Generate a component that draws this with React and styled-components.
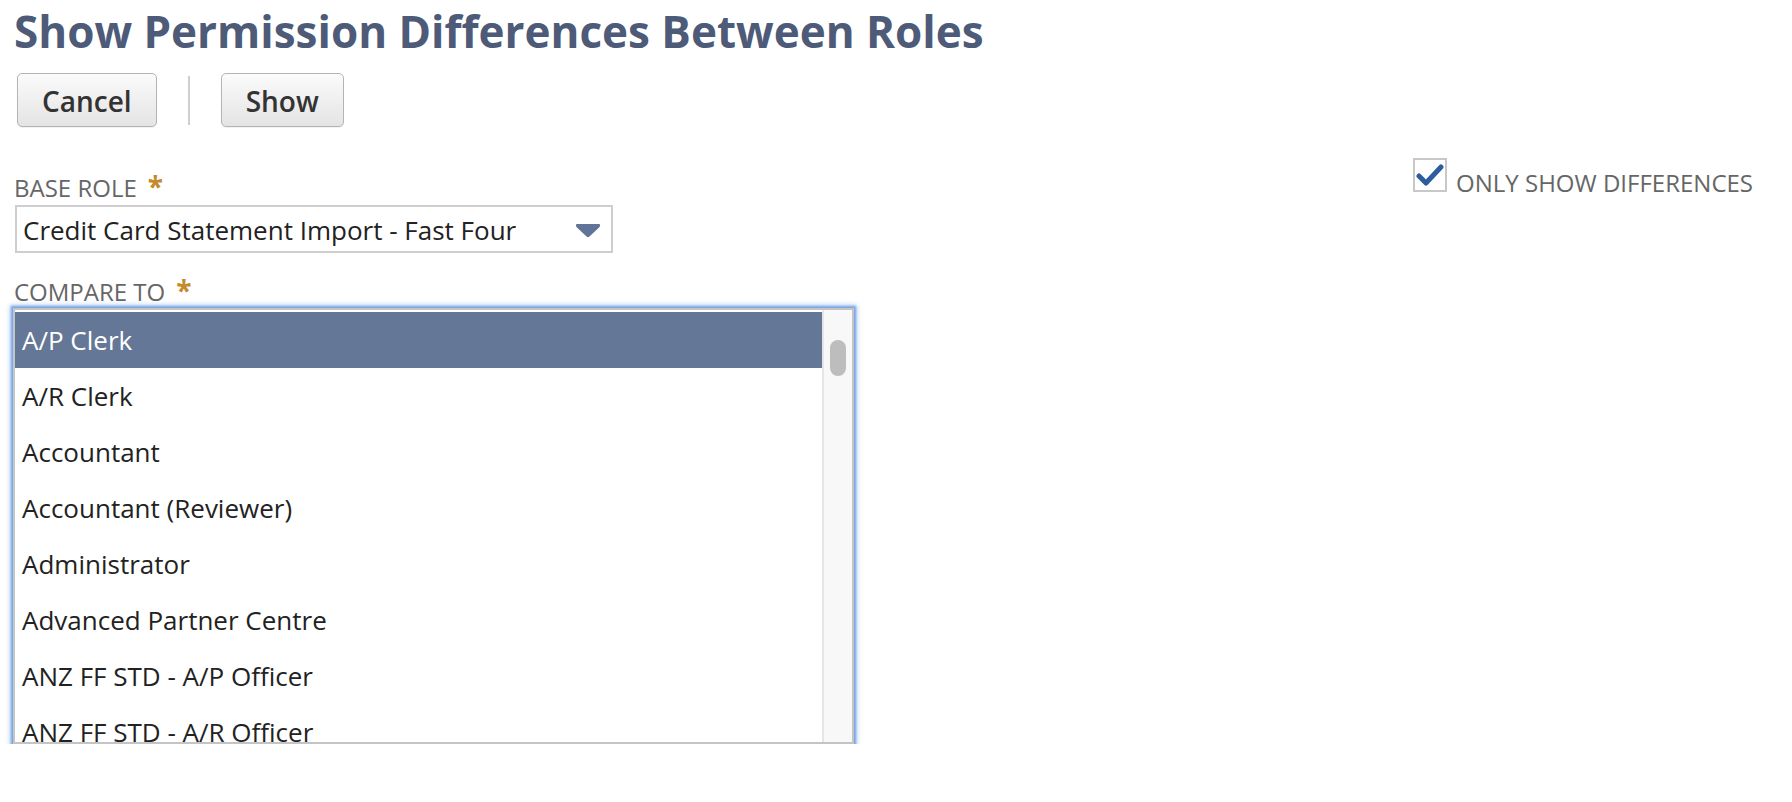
import React from 'react';
import styled, { createGlobalStyle } from 'styled-components';

const GlobalStyle = createGlobalStyle`
  html, body {
    margin: 0;
    padding: 0;
    background: #ffffff;
  }

  body {
    font-family: "Open Sans", "Noto Sans", "Liberation Sans", sans-serif;
    color: #222;
  }
`;

const roles = [
  'A/P Clerk',
  'A/R Clerk',
  'Accountant',
  'Accountant (Reviewer)',
  'Administrator',
  'Advanced Partner Centre',
  'ANZ FF STD - A/P Officer',
  'ANZ FF STD - A/R Officer',
];

const Page = styled.div`
  padding: 5px 39px 0 14px;
`;

const Title = styled.h1`
  margin: 0;
  font-size: 44px;
  line-height: 52px;
  font-weight: 700;
  color: #4d5a78;
`;

const Toolbar = styled.div`
  display: flex;
  align-items: center;
  margin: 16px 0 0 3px;
`;

const Button = styled.button`
  height: 54px;
  box-sizing: border-box;
  padding: 3px 24px 0;
  line-height: 49px;
  font-family: inherit;
  font-size: 28px;
  font-weight: 600;
  color: #333;
  background: linear-gradient(#fbfbfb, #e4e4e4);
  border: 1px solid #b4b4b4;
  border-radius: 5px;
  box-shadow: 0 1px 1px rgba(0, 0, 0, 0.06);
  cursor: pointer;
`;

const Divider = styled.span`
  width: 2px;
  height: 49px;
  margin: 0 31px;
  background: #cfcfcf;
`;

const FormArea = styled.div`
  display: flex;
  justify-content: space-between;
  align-items: flex-start;
`;

const Fields = styled.div`
  display: flex;
  flex-direction: column;
  padding-top: 47px;
`;

const Label = styled.div`
  font-size: 24px;
  line-height: 28px;
  color: #666;
  text-transform: uppercase;
  margin-bottom: ${p => p.$gap}px;
`;

const Required = styled.span`
  font-size: 28px;
  line-height: 0;
  font-weight: 700;
  color: #c48a2b;
  margin-left: 11px;
`;

const SelectBox = styled.div`
  display: flex;
  align-items: flex-start;
  justify-content: space-between;
  width: 598px;
  height: 48px;
  box-sizing: border-box;
  margin: 0 0 25px 1px;
  border: 2px solid #cecece;
  background: #fff;
`;

const SelectValue = styled.span`
  padding: 3px 0 0 6px;
  font-size: 26px;
  line-height: 41px;
  color: #222;
`;

const SelectArrow = styled.svg`
  width: 26px;
  height: 15px;
  margin: 16px 10px 0 0;
`;

const ListBox = styled.div`
  display: flex;
  width: 841px;
  height: 436px;
  box-sizing: border-box;
  margin: 2px 0 0 -1px;
  border: 2px solid #c4c4c4;
  background: #fff;
  box-shadow: 0 0 2px 2px rgba(112, 160, 228, 0.9), 0 0 5px 3px rgba(140, 180, 236, 0.6);
`;

const Options = styled.div`
  flex: 1;
  padding-top: 2px;
  overflow: hidden;
`;

const Option = styled.div`
  height: 56px;
  padding-left: 7px;
  font-size: 26px;
  line-height: 56px;
  white-space: nowrap;
  color: ${p => (p.$selected ? '#ffffff' : '#222')};
  background: ${p => (p.$selected ? '#657796' : 'transparent')};
`;

const ScrollTrack = styled.div`
  width: 28px;
  padding-top: 30px;
  display: flex;
  justify-content: center;
  align-items: flex-start;
  background: #f8f8f8;
  border-left: 2px solid #e6e6e6;
`;

const ScrollThumb = styled.div`
  width: 16px;
  height: 36px;
  border-radius: 8px;
  background: #bdbdbd;
`;

const CheckField = styled.label`
  display: flex;
  align-items: flex-start;
  gap: 9px;
  padding-top: 31px;
  cursor: pointer;
`;

const CheckBox = styled.span`
  display: flex;
  align-items: center;
  justify-content: center;
  width: 34px;
  height: 34px;
  box-sizing: border-box;
  border: 2px solid #c8c8c8;
  background: #fff;
`;

const CheckText = styled.span`
  padding-top: 11px;
  font-size: 24px;
  line-height: 28px;
  color: #666;
`;

export default function App() {
  return (
    <>
      <GlobalStyle />
      <Page>
        <Title>Show Permission Differences Between Roles</Title>

        <Toolbar>
          <Button>Cancel</Button>
          <Divider />
          <Button>Show</Button>
        </Toolbar>

        <FormArea>
          <Fields>
            <Label $gap={3}>
              Base Role<Required>*</Required>
            </Label>
            <SelectBox>
              <SelectValue>Credit Card Statement Import - Fast Four</SelectValue>
              <SelectArrow viewBox="0 0 26 15">
                <path
                  d="M2 1 H24 Q25.5 1 25 2.6 L24.6 4 L14.4 13.6 Q13 14.8 11.6 13.6 L1.4 4 L1 2.6 Q0.5 1 2 1 Z"
                  fill="#5f7497"
                />
              </SelectArrow>
            </SelectBox>

            <Label $gap={0}>
              Compare To<Required>*</Required>
            </Label>
            <ListBox>
              <Options>
                {roles.map((role, i) => (
                  <Option key={role} $selected={i === 0}>
                    {role}
                  </Option>
                ))}
              </Options>
              <ScrollTrack>
                <ScrollThumb />
              </ScrollTrack>
            </ListBox>
          </Fields>

          <CheckField>
            <CheckBox>
              <svg width="28" height="24" viewBox="0 0 28 24">
                <path
                  d="M3 13 L10 20 L25 4"
                  fill="none"
                  stroke="#2d5c9f"
                  strokeWidth="5"
                  strokeLinecap="round"
                  strokeLinejoin="round"
                />
              </svg>
            </CheckBox>
            <CheckText>ONLY SHOW DIFFERENCES</CheckText>
          </CheckField>
        </FormArea>
      </Page>
    </>
  );
}
